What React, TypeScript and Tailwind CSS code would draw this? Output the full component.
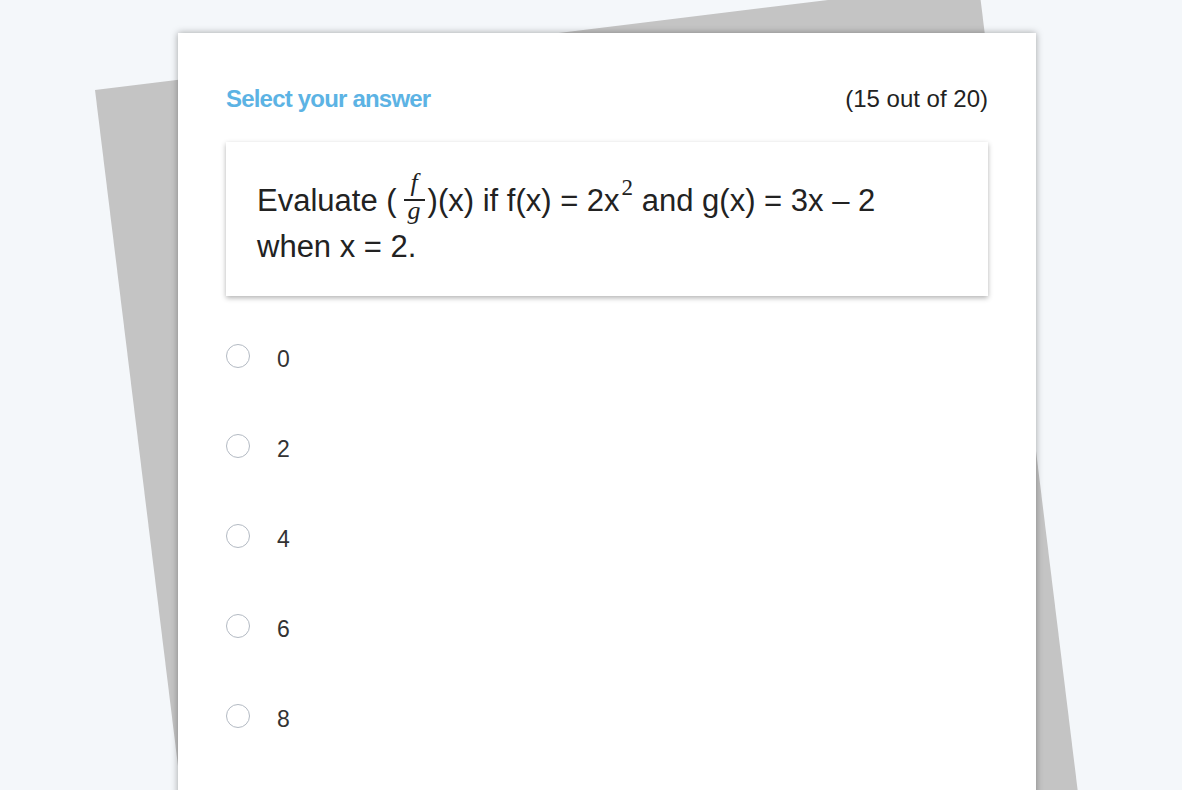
import React from 'react';

// Answer options for the quiz question
const OPTIONS = ['0', '2', '4', '6', '8'];

const SANS = { fontFamily: '"Liberation Sans", Arial, sans-serif' };
const SERIF = { fontFamily: '"Liberation Serif", "Times New Roman", serif' };

// Small stacked f/g fraction, like the MathJax output
const Fraction = () => (
    <span
        className="inline-flex flex-col items-center ml-[7px] mr-[3px] -my-[10px] align-[20px]"
        style={SERIF}
    >
        <span className="italic text-[26px] leading-[20px] h-[20px]">f</span>
        <span className="block mt-[6px] h-[1.5px] w-[21px] bg-[#222]" />
        <span className="italic text-[26px] leading-[20px] h-[20px]">g</span>
    </span>
);

const RadioRow = ({ label }: { label: string }) => (
    <label className="flex items-center h-[24px] cursor-pointer">
        <span className="w-[24px] h-[24px] rounded-full border border-[#b3bac3] bg-white shrink-0" />
        <span className="ml-[27px] mt-[6px] text-[23px] text-[#333] leading-none">{label}</span>
    </label>
);

export default function App() {
    return (
        <div className="relative w-full h-[790px] overflow-hidden bg-[#f4f7fa]" style={SANS}>
            {/* Tilted sheet behind the card */}
            <div className="absolute left-[95px] top-[90px] w-[890px] h-[1100px] bg-[#c4c4c4] origin-top-left -rotate-[7deg]" />

            {/* Card */}
            <div className="relative ml-[178px] mt-[33px] w-[858px] h-[800px] bg-white shadow-[0_0_7px_rgba(0,0,0,0.35)] px-[48px] pt-[52px]">
                <div className="flex items-center justify-between h-[28px]">
                    <span className="text-[24px] font-bold tracking-[-0.8px] text-[#5cb3e4]">Select your answer</span>
                    <span className="text-[24px] text-[#222]">(15 out of 20)</span>
                </div>

                {/* Question */}
                <div className="mt-[29px] bg-white shadow-[0_2px_5px_rgba(0,0,0,0.3)] pl-[31px] pr-[24px] pt-[36px] pb-[26px] text-[31px] leading-[46px] text-[#222]">
                    Evaluate (<Fraction />)(x) if f(x) = 2x
                    <span className="relative -top-[16px] ml-[2px] text-[23px] leading-none" style={SERIF}>2</span>
                    {' '}and g(x) = 3x – 2
                    <br />
                    when x = 2.
                </div>

                {/* Options */}
                <div className="mt-[48px] flex flex-col gap-[66px]">
                    {OPTIONS.map((opt) => (
                        <RadioRow key={opt} label={opt} />
                    ))}
                </div>
            </div>
        </div>
    );
}
